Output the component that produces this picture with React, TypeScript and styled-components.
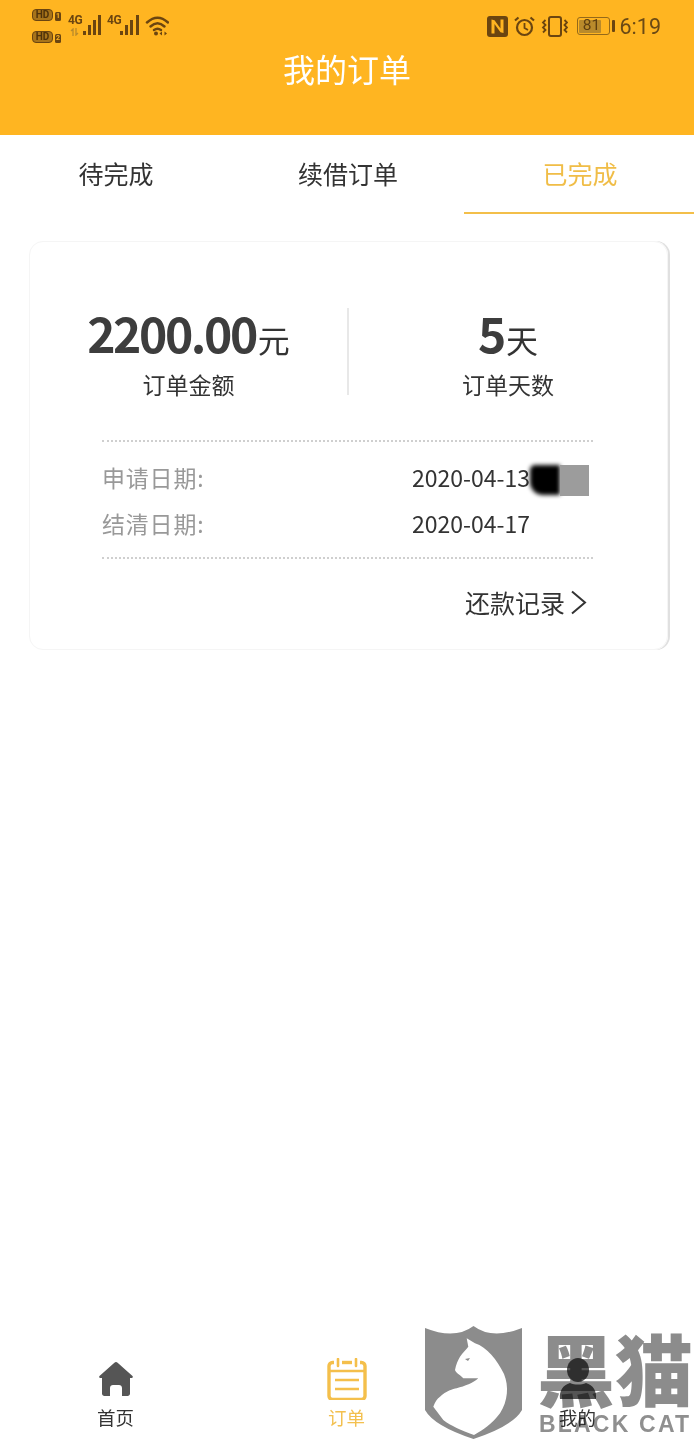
import React from "react";
import styled, { createGlobalStyle } from "styled-components";

const Global = createGlobalStyle`
  html, body { margin: 0; padding: 0; background: #fff; }
  * { box-sizing: border-box; }
  body { font-family: "Noto Sans CJK SC", "Noto Sans", sans-serif; overflow: hidden; }
`;

const Page = styled.div`
  position: relative;
  width: 694px;
  height: 1440px;
  display: flex;
  flex-direction: column;
  background: #fff;
  overflow: hidden;
`;

const Header = styled.header`
  height: 135px;
  flex: none;
  background: #ffb521;
  display: flex;
  flex-direction: column;
`;

const StatusBar = styled.div`
  height: 46px;
  flex: none;
  display: flex;
  justify-content: space-between;
  color: #6b4510;
  padding: 8px 33px 0 32px;
`;

const StatusGroup = styled.div`
  display: flex;
  align-items: flex-start;
`;

const SimColumn = styled.div`
  width: 36px;
  display: flex;
  flex-direction: column;
  gap: 10px;
  padding-top: 1px;
`;

const SimRow = styled.div`
  display: flex;
  align-items: center;
  gap: 2px;
`;

const HdBadge = styled.span`
  width: 21px;
  height: 12px;
  border-radius: 4px;
  border: 1.5px solid #6b4510;
  background: #a8741a;
  color: #4f320a;
  font: 700 10px/9px "Roboto", sans-serif;
  text-align: center;
`;

const SimNumber = styled.span`
  width: 6px;
  height: 9px;
  margin-top: 3px;
  border-radius: 1.5px;
  background: #6b4510;
  color: #ffb521;
  font: 700 7px/9px "Roboto", sans-serif;
  text-align: center;
`;

const Network = styled.div<{ $w: number; $ml?: number }>`
  position: relative;
  width: ${(p) => p.$w}px;
  height: 30px;
  margin-top: 6px;
  margin-left: ${(p) => p.$ml ?? 0}px;
  flex: none;
`;

const NetLabel = styled.span`
  position: absolute;
  left: 0;
  top: 0;
  font: 700 12px/13px "Roboto", sans-serif;
  letter-spacing: -0.4px;
  color: #6b4510;
`;

const NetArrows = styled.svg`
  position: absolute;
  left: 2px;
  top: 14px;
`;

const NetSvg = styled.svg`
  position: absolute;
  right: 0;
  top: 1px;
`;

const Wifi = styled.svg`
  margin-top: 7px;
  margin-left: 5px;
`;

const RightIcon = styled.svg<{ $ml: number }>`
  margin-top: 8px;
  margin-left: ${(p) => p.$ml}px;
  flex: none;
`;

const Battery = styled.div`
  position: relative;
  width: 33px;
  height: 18px;
  margin: 9px 0 0 9px;
  border: 1.5px solid #94691a;
  border-radius: 3px;
  padding: 1.5px;
`;

const BatteryFill = styled.div`
  width: 78%;
  height: 100%;
  background: #b98a2b;
  border-radius: 1px;
`;

const BatteryText = styled.span`
  position: absolute;
  left: 0;
  right: 3px;
  top: 0;
  text-align: center;
  font: 400 15.5px/15px "Roboto", sans-serif;
  color: #5f3f10;
`;

const BatteryNub = styled.span`
  width: 3px;
  height: 12px;
  margin: 12px 0 0 2px;
  background: #6b4510;
  border-radius: 1px;
`;

const Time = styled.span`
  margin: 6px 0 0 5px;
  font: 400 21.5px/26px "Roboto", sans-serif;
  color: #6b4a15;
`;

const Title = styled.h1`
  margin: 0;
  text-align: center;
  color: #fff;
  font-size: 32px;
  font-weight: 400;
  line-height: 44px;
`;

const Tabs = styled.nav`
  display: grid;
  grid-template-columns: 232px 232px 230px;
  height: 79px;
  flex: none;
`;

const Tab = styled.div<{ $active?: boolean }>`
  display: flex;
  align-items: center;
  justify-content: center;
  padding-bottom: 2px;
  padding-left: ${(p) => (p.$active ? "2px" : "0")};
  font-size: 25px;
  color: ${(p) => (p.$active ? "#f0bd47" : "#333")};
  border-bottom: 2px solid ${(p) => (p.$active ? "#f3bf4a" : "transparent")};
`;

const Card = styled.section`
  width: 639px;
  height: 409px;
  margin: 27px 0 0 29px;
  flex: none;
  border-radius: 14px;
  border: 1px solid #f5f5f5;
  box-shadow: 2px 0 0 #e0e0e0;
  padding-top: 66px;
`;

const Stats = styled.div`
  display: grid;
  grid-template-columns: 317px 2px 1fr;
  height: 92px;
`;

const Stat = styled.div`
  display: flex;
  flex-direction: column;
  align-items: center;
`;

const StatValue = styled.div`
  display: flex;
  align-items: baseline;
  height: 48px;
  line-height: 48px;
  color: #3d3d3d;
  font-size: 48px;
  font-weight: 700;
  letter-spacing: -2.4px;
`;

const StatUnit = styled.span`
  margin-left: 2px;
  font-size: 32px;
  font-weight: 400;
  letter-spacing: 0;
  color: #333;
`;

const StatLabel = styled.div`
  margin-top: 13px;
  font-size: 23px;
  line-height: 30px;
  color: #333;
`;

const StatDivider = styled.div`
  height: 87px;
  background: #e8e8e8;
`;

const Dates = styled.div`
  margin: 40px 74px 0 72px;
  padding: 12px 0 11px;
  border-top: 2px dotted #cfcfcf;
  border-bottom: 2px dotted #cfcfcf;
`;

const DateRow = styled.div`
  display: grid;
  grid-template-columns: 310px 1fr;
  align-items: center;
  height: 46px;
  font-size: 23px;
`;

const DateLabel = styled.span`
  color: #999;
  letter-spacing: 0.8px;
`;

const DateValue = styled.span`
  display: flex;
  align-items: center;
  color: #333;
  font-size: 23px;
`;

const Redaction = styled.span`
  display: flex;
  width: 59px;
  height: 31px;
  margin-top: 7px;
  flex: none;
`;

const RedactBlack = styled.span`
  width: 30px;
  height: 30px;
  background: #000;
  border-radius: 5px 0 0 13px;
  filter: blur(2px);
`;

const RedactGrey = styled.span`
  position: relative;
  z-index: 1;
  width: 30px;
  height: 31px;
  background: #9c9c9c;
`;

const LinkRow = styled.div`
  display: flex;
  justify-content: flex-end;
  align-items: center;
  gap: 5px;
  height: 34px;
  margin-top: 26px;
  padding-right: 80px;
  font-size: 25px;
  color: #333;
`;

const TabBar = styled.nav`
  margin-top: auto;
  height: 90px;
  flex: none;
  display: grid;
  grid-template-columns: repeat(3, 231px);
  padding-top: 8px;
`;

const TabBarItem = styled.div<{ $active?: boolean }>`
  display: flex;
  flex-direction: column;
  align-items: center;
  color: ${(p) => (p.$active ? "#f3c04f" : "#333")};
  font-size: 18.5px;
  line-height: 24px;
`;

const TabIconBox = styled.div`
  height: 42px;
  margin-bottom: 5px;
  display: flex;
  align-items: center;
`;

const Watermark = styled.div`
  position: absolute;
  left: 425px;
  top: 1326px;
  width: 269px;
  height: 114px;
  mix-blend-mode: multiply;
  pointer-events: none;
`;

const ShieldSvg = styled.svg`
  position: absolute;
  left: 0;
  top: 0;
`;

const MarkCn = styled.div`
  position: absolute;
  left: 112px;
  top: -5px;
  font-size: 78px;
  font-weight: 900;
  line-height: 92px;
  color: #8c8c8c;
  white-space: nowrap;
`;

const MarkEn = styled.div`
  position: absolute;
  left: 114px;
  top: 85px;
  font: 700 23px/26px "Liberation Sans", sans-serif;
  letter-spacing: 2.2px;
  color: #8f8f8f;
  white-space: nowrap;
`;

const SignalArrows = () => (
  <NetArrows width="10" height="8" viewBox="0 0 10 8" fill="none" stroke="#b98a2b" strokeWidth="1.300">
    <path d="M3 8V1L1 3M6 0v7l2-2" />
  </NetArrows>
);

const App: React.FC = () => (
  <Page>
    <Global />
    <Header>
      <StatusBar>
        <StatusGroup>
          <SimColumn>
            <SimRow><HdBadge>HD</HdBadge><SimNumber>1</SimNumber></SimRow>
            <SimRow><HdBadge>HD</HdBadge><SimNumber>2</SimNumber></SimRow>
          </SimColumn>
          <Network $w={33}>
            <NetLabel>4G</NetLabel>
            <SignalArrows />
            <NetSvg width="20" height="21" viewBox="0 0 20 21" fill="#6b4510">
              <rect x="2" y="16" width="3" height="4" />
              <rect x="7" y="10" width="3" height="10" />
              <rect x="12" y="5" width="3" height="15" />
              <rect x="17" y="0" width="3" height="20" />
            </NetSvg>
          </Network>
          <Network $w={33} $ml={6}>
            <NetLabel>4G</NetLabel>
            <NetSvg width="20" height="21" viewBox="0 0 20 21" fill="#6b4510">
              <rect x="0" y="16" width="3" height="4" />
              <rect x="5" y="10" width="3" height="10" />
              <rect x="10" y="5" width="3" height="15" />
              <rect x="16" y="0" width="3" height="20" />
            </NetSvg>
          </Network>
          <Wifi width="24" height="21" viewBox="0 0 24 21" fill="none" stroke="#6b4510" strokeWidth="2.500" strokeLinecap="round">
            <path d="M2 7.500Q12.500 -2 23 7.500" />
            <path d="M5.500 11.500Q12.500 5 19.500 11.500" />
            <path d="M9 15Q12.500 12.500 16 15" />
            <circle cx="11" cy="18.500" r="2" fill="#6b4510" stroke="none" />
            <path d="M17 16.500l-2.500 2 2.500 2zM19.500 16.500l2.500 2-2.500 2z" fill="#6b4510" stroke="none" />
          </Wifi>
        </StatusGroup>
        <StatusGroup>
          <RightIcon $ml={0} width="21" height="21" viewBox="0 0 21 21">
            <rect width="21" height="21" rx="3" fill="#6b4510" />
            <path d="M4.500 3.500l3 .8 6 8.200V3.500h3v13.500l-3-.8-6-8.200v9.500h-3z" fill="#ffb521" />
          </RightIcon>
          <RightIcon $ml={6} width="21" height="21" viewBox="0 0 21 21" fill="none" stroke="#6b4510" strokeWidth="2.200">
            <circle cx="10.500" cy="11.500" r="7.500" />
            <path d="M10.500 7v5l3.500 2" strokeWidth="1.800" />
            <path d="M1 4.500L4.500 1.500M20 4.500l-3.500-3" strokeWidth="2.200" />
          </RightIcon>
          <RightIcon $ml={6} width="27" height="21" viewBox="0 0 27 21" fill="none" stroke="#6b4510" strokeWidth="2">
            <rect x="8" y="1" width="12" height="19" rx="2" />
            <path d="M4.500 4L2 6.500 4.500 9 2 11.500 4.500 14 2 16.500M23.500 4L26 6.500 23.500 9 26 11.500 23.500 14 26 16.500" strokeWidth="1.800" />
          </RightIcon>
          <Battery>
            <BatteryFill />
            <BatteryText>81</BatteryText>
          </Battery>
          <BatteryNub />
          <Time>6:19</Time>
        </StatusGroup>
      </StatusBar>
      <Title>我的订单</Title>
    </Header>
    <Tabs>
      <Tab>待完成</Tab>
      <Tab>续借订单</Tab>
      <Tab $active>已完成</Tab>
    </Tabs>
    <Card>
      <Stats>
        <Stat>
          <StatValue>2200.00<StatUnit>元</StatUnit></StatValue>
          <StatLabel>订单金额</StatLabel>
        </Stat>
        <StatDivider />
        <Stat>
          <StatValue>5<StatUnit>天</StatUnit></StatValue>
          <StatLabel>订单天数</StatLabel>
        </Stat>
      </Stats>
      <Dates>
        <DateRow>
          <DateLabel>申请日期:</DateLabel>
          <DateValue>
            2020-04-13
            <Redaction><RedactBlack /><RedactGrey /></Redaction>
          </DateValue>
        </DateRow>
        <DateRow>
          <DateLabel>结清日期:</DateLabel>
          <DateValue>2020-04-17</DateValue>
        </DateRow>
      </Dates>
      <LinkRow>
        还款记录
        <svg width="17" height="25" viewBox="0 0 17 25" fill="none" stroke="#333" strokeWidth="2">
          <path d="M2 1.500L15 12.500 2 23.500" />
        </svg>
      </LinkRow>
    </Card>
    <TabBar>
      <TabBarItem>
        <TabIconBox>
          <svg width="36" height="36" viewBox="0 0 36 36" fill="#555">
            <path d="M18 1c.6 0 1.100.2 1.600.7L34.500 15c.8.800.3 2-.8 2H32v15.500c0 1.400-1 2.500-2.500 2.500H24V27c0-1.700-1.300-3-3-3h-6c-1.700 0-3 1.300-3 3v8H6.500C5 35 4 33.900 4 32.500V17H2.300c-1.100 0-1.600-1.200-.8-2L16.400 1.700C16.900 1.200 17.400 1 18 1z" />
          </svg>
        </TabIconBox>
        首页
      </TabBarItem>
      <TabBarItem $active>
        <TabIconBox>
          <svg width="40" height="42" viewBox="0 0 40 42" fill="none" stroke="#f4bf4b" strokeWidth="3.400">
            <path d="M7 4.500H5.500A3.500 3.500 0 0 0 2 8v30a3.500 3.500 0 0 0 3.500 3.500h29a3.500 3.500 0 0 0 3.500-3.500V8a3.500 3.500 0 0 0-3.500-3.500H33" />
            <path d="M15 4.500h10" />
            <path d="M11 1v7M29 1v7" strokeLinecap="round" strokeWidth="2.600" />
            <path d="M2 13h36" strokeWidth="2.600" />
            <path d="M8 22h24M8 31h24" strokeWidth="2.600" />
          </svg>
        </TabIconBox>
        订单
      </TabBarItem>
      <TabBarItem>
        <TabIconBox>
          <svg width="40" height="42" viewBox="0 0 40 42" fill="#555">
            <ellipse cx="20" cy="12" rx="11" ry="12" />
            <path d="M2 41c-1-8 3-14 10-16 5 2 11 2 16 0 7 2 11 8 10 16z" />
          </svg>
        </TabIconBox>
        我的
      </TabBarItem>
    </TabBar>
    <Watermark>
      <ShieldSvg width="98" height="114" viewBox="0 0 98 114">
        <path d="M0 2Q30 14 48.500 0Q67 14 97 2V84Q88 100 48.500 113Q9 100 0 84Z" fill="#8c8c8c" />
        <path d="M41.700 12.300L50 17.300C62 21 72 34 79 48 84 60 83 75 75 87.300 67 98 58 104 49 109 36 104 26 100 18.300 94L8.300 80.700C10 76 12 73 15 70.700 21 65 28 63 31.700 62.300 40 60 48 57 53.300 52.300L38.300 52.300C34 48 31 47 30 44 31 38 33 34 35 30.700 38 26 41 24 43.300 20.700Z" fill="#fff" />
        <path d="M40 33l5-1-2 3z" fill="#8c8c8c" />
      </ShieldSvg>
      <MarkCn>黑猫</MarkCn>
      <MarkEn>BLACK CAT</MarkEn>
    </Watermark>
  </Page>
);

export default App;
